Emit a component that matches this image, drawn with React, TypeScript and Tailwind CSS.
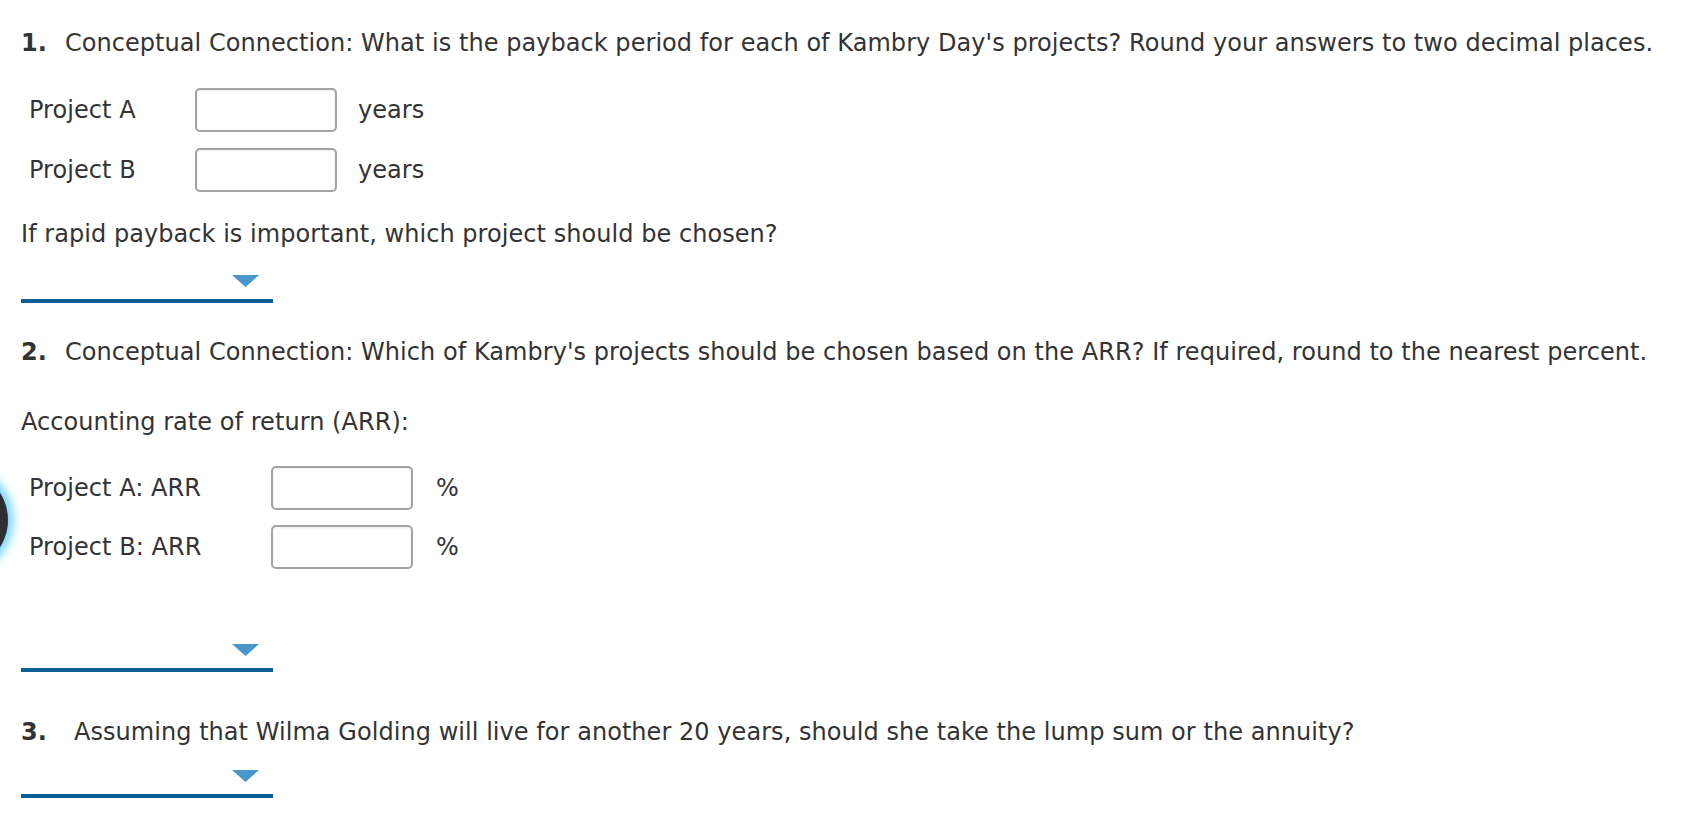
import React from "react";

function Caret() {
  return (
    <svg width="27" height="12" viewBox="0 0 27 12" className="block">
      <polygon points="0,0 27,0 13.5,12" fill="#4b95cd" />
    </svg>
  );
}

function Dropdown({ mt }: { mt: string }) {
  return (
    <div className={`${mt} w-[252px] h-[40px] border-b-[4px] border-[#0b5f98] flex items-center justify-end pr-[14px]`}>
      <Caret />
    </div>
  );
}

function Box() {
  return (
    <div className="w-[142px] h-[44px] rounded-[5px] border-2 border-[#a3a3a3] bg-white shadow-[inset_0_1px_2px_rgba(0,0,0,0.08)]" />
  );
}

export default function App() {
  return (
    <div
      className="relative min-h-[824px] bg-white text-[#333333] text-[24px] leading-[30px] tracking-[0.05px] pl-[21px] pt-[28px] overflow-hidden"
      style={{ fontFamily: '"DejaVu Sans", Verdana, sans-serif' }}
    >
      <div className="absolute left-[-92px] top-[470px] w-[100px] h-[100px] rounded-full bg-[#2f2f2f] shadow-[0_0_10px_5px_rgba(90,205,255,0.85)]" />

      <p className="whitespace-nowrap">
        <span className="font-bold">1.</span>
        <span className="ml-[18px]">Conceptual Connection: What is the payback period for each of Kambry Day's projects? Round your answers to two decimal places.</span>
      </p>

      <div className="mt-[30px] ml-[8px] flex flex-col gap-[16px]">
        <div className="flex items-center">
          <span className="w-[166px]">Project A</span>
          <Box />
          <span className="ml-[21px]">years</span>
        </div>
        <div className="flex items-center">
          <span className="w-[166px]">Project B</span>
          <Box />
          <span className="ml-[21px]">years</span>
        </div>
      </div>

      <p className="mt-[27px]">If rapid payback is important, which project should be chosen?</p>

      <Dropdown mt="mt-[14px]" />

      <p className="mt-[34px] whitespace-nowrap">
        <span className="font-bold">2.</span>
        <span className="ml-[18px]">Conceptual Connection: Which of Kambry's projects should be chosen based on the ARR? If required, round to the nearest percent.</span>
      </p>

      <p className="mt-[40px]">Accounting rate of return (ARR):</p>

      <div className="mt-[29px] ml-[8px] flex flex-col gap-[15px]">
        <div className="flex items-center">
          <span className="w-[242px]">Project A: ARR</span>
          <Box />
          <span className="ml-[23px]">%</span>
        </div>
        <div className="flex items-center">
          <span className="w-[242px]">Project B: ARR</span>
          <Box />
          <span className="ml-[23px]">%</span>
        </div>
      </div>

      <Dropdown mt="mt-[63px]" />

      <p className="mt-[45px] whitespace-nowrap">
        <span className="font-bold">3.</span>
        <span className="ml-[27px]">Assuming that Wilma Golding will live for another 20 years, should she take the lump sum or the annuity?</span>
      </p>

      <Dropdown mt="mt-[11px]" />
    </div>
  );
}
